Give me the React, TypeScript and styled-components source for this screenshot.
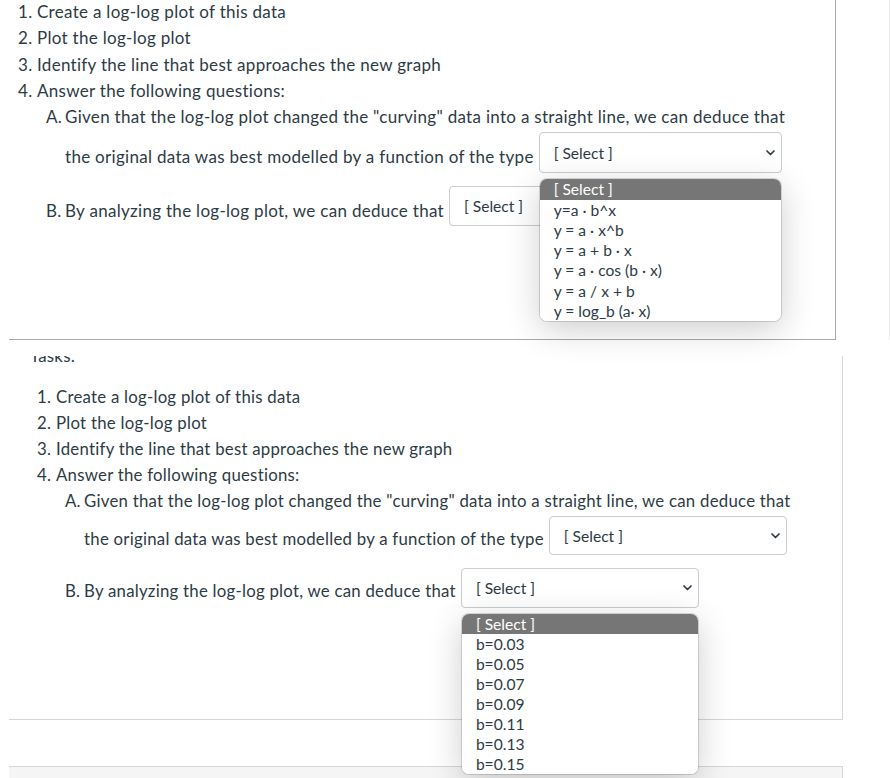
import React from "react";
import styled, { createGlobalStyle } from "styled-components";

const GlobalStyle = createGlobalStyle`
  html, body { margin: 0; padding: 0; background: #fff; overflow: hidden; }
  body {
    font-family: Lato, "Open Sans", "Liberation Sans", sans-serif;
    color: #2d3b45;
    font-size: 16px;
  }
`;

const Page = styled.div`
  width: 890px;
  height: 778px;
  overflow: hidden;
  position: relative;
`;

const TopShot = styled.div`
  width: 890px;
  box-sizing: border-box;
  border-right: 1px solid #ececec;
`;

const TopPanel = styled.section`
  margin-left: 9px;
  width: 827px;
  height: 341px;
  box-sizing: border-box;
  border-right: 1px solid #a9a9a9;
  border-bottom: 1px solid #a9a9a9;
  padding-left: 9px;
  font-size: 17px;
  letter-spacing: 0.3px;
`;

const BottomPanel = styled.section`
  margin-left: 9px;
  margin-top: 16px;
  width: 834px;
  box-sizing: border-box;
  border-right: 1px solid #d6d6d6;
  border-bottom: 1px solid #d6d6d6;
  padding-left: 21px;
  padding-bottom: 111px;
  font-size: 16.8px;
  letter-spacing: 0.25px;
`;

const GrayBar = styled.div`
  margin-left: 9px;
  margin-top: 46px;
  width: 834px;
  height: 40px;
  box-sizing: border-box;
  border-top: 1px solid #d6d6d6;
  border-right: 1px solid #d6d6d6;
  background: #f5f5f5;
`;

const TasksClip = styled.div`
  height: 9px;
  overflow: hidden;
`;

const TasksText = styled.p`
  margin: -13px 0 0;
  line-height: 26px;
`;

const List = styled.div<{ $mt: number; $ml: number }>`
  margin-top: ${(p) => p.$mt}px;
  margin-left: ${(p) => p.$ml}px;
`;

const Item = styled.div<{ $lh: number }>`
  display: flex;
  align-items: flex-start;
  line-height: ${(p) => p.$lh}px;
`;

const Marker = styled.span<{ $dy?: number }>`
  flex: none;
  width: 19px;
  white-space: nowrap;
  padding-top: ${(p) => p.$dy ?? 0}px;
`;

const Body = styled.div`
  flex: 1;
  min-width: 0;
  white-space: nowrap;
`;

const SubList = styled.div`
  margin-left: 9px;
`;

const SelectRow = styled.div<{ $mt: number }>`
  display: flex;
  align-items: flex-start;
  margin-top: ${(p) => p.$mt}px;
`;

const RowText = styled.span<{ $dy: number }>`
  padding-top: ${(p) => p.$dy}px;
  margin-right: 5px;
  white-space: nowrap;
`;

const SelectBox = styled.div<{ $w: number; $h: number }>`
  position: relative;
  flex: none;
  width: ${(p) => p.$w}px;
  height: ${(p) => p.$h}px;
  box-sizing: border-box;
  border: 1px solid #c7cdd1;
  border-radius: 4px;
  background: #fff;
  display: flex;
  align-items: center;
  justify-content: space-between;
  padding: 0 6px 0 14px;
  line-height: 20px;
  font-size: 15.6px;
  letter-spacing: 0;
  color: #2d3b45;
`;

const Chevron = styled.svg`
  flex: none;
  display: block;
`;

const Listbox = styled.div<{ $w: number }>`
  position: absolute;
  left: 0;
  top: calc(100% + 7px);
  width: ${(p) => p.$w}px;
  z-index: 10;
  background: #fff;
  border-radius: 7px;
  overflow: hidden;
  box-shadow: 0 0 0 1px rgba(0, 0, 0, 0.14), 0 8px 34px rgba(0, 0, 0, 0.2);
`;

const OptionRow = styled.div<{ $active?: boolean; $h: number }>`
  height: ${(p) => p.$h}px;
  line-height: ${(p) => p.$h}px;
  padding-left: 14px;
  font-size: 15.6px;
  white-space: nowrap;
  background: ${(p) => (p.$active ? "#767676" : "#fff")};
  color: ${(p) => (p.$active ? "#fff" : "#2d3b45")};
`;

const ChevronIcon = () => (
  <Chevron width="9" height="6" viewBox="0 0 9 6">
    <path d="M1 1l3.5 3.5L8 1" fill="none" stroke="#2d3b45" strokeWidth="1.7" strokeLinecap="round" strokeLinejoin="round" />
  </Chevron>
);

type SelectProps = {
  w: number;
  h: number;
  open?: string[];
  listW?: number;
  rowH?: number;
};

const Select = ({ w, h, open, listW, rowH = 20 }: SelectProps) => (
  <SelectBox $w={w} $h={h}>
    <span>[ Select ]</span>
    <ChevronIcon />
    {open && (
      <Listbox $w={listW ?? w - 2}>
        <OptionRow $active $h={rowH}>[ Select ]</OptionRow>
        {open.map((o) => (
          <OptionRow key={o} $h={rowH}>
            {o}
          </OptionRow>
        ))}
      </Listbox>
    )}
  </SelectBox>
);

const TYPE_OPTIONS = [
  "y=a · b^x",
  "y = a · x^b",
  "y = a + b · x",
  "y = a · cos (b · x)",
  "y = a / x + b",
  "y = log_b (a· x)",
];

const B_OPTIONS = ["b=0.03", "b=0.05", "b=0.07", "b=0.09", "b=0.11", "b=0.13", "b=0.15"];

const STEPS = [
  "Create a log-log plot of this data",
  "Plot the log-log plot",
  "Identify the line that best approaches the new graph",
];

type TaskListProps = {
  lh: number;
  mt: number;
  ml: number;
  dy: number;
  aH: number;
  bH: number;
  aW: number;
  bW: number;
  openA?: boolean;
  openB?: boolean;
  rowH?: number;
};

const TaskList = ({ lh, mt, ml, dy, aH, bH, aW, bW, openA, openB, rowH }: TaskListProps) => (
  <List $mt={mt} $ml={ml}>
    {STEPS.map((s, i) => (
      <Item key={s} $lh={lh}>
        <Marker>{i + 1}.</Marker>
        <Body>{s}</Body>
      </Item>
    ))}
    <Item $lh={lh}>
      <Marker>4.</Marker>
      <Body>
        Answer the following questions:
        <SubList>
          <Item $lh={lh}>
            <Marker>A.</Marker>
            <Body>
              Given that the log-log plot changed the "curving" data into a straight line, we can deduce that
              <SelectRow $mt={2}>
                <RowText $dy={dy}>the original data was best modelled by a function of the type</RowText>
                <Select w={aW} h={aH} open={openA ? TYPE_OPTIONS : undefined} rowH={rowH} />
              </SelectRow>
            </Body>
          </Item>
          <SelectRow $mt={13}>
            <Marker $dy={dy}>B.</Marker>
            <RowText $dy={dy}>By analyzing the log-log plot, we can deduce that</RowText>
            <Select w={bW} h={bH} open={openB ? B_OPTIONS : undefined} rowH={rowH} />
          </SelectRow>
        </SubList>
      </Body>
    </Item>
  </List>
);

export default function App() {
  return (
    <Page>
      <GlobalStyle />
      <TopShot>
        <TopPanel>
          <TaskList lh={26.25} mt={-1} ml={0} dy={12} aH={41} bH={40} aW={243} bW={238} openA rowH={20.3} />
        </TopPanel>
      </TopShot>
      <BottomPanel>
        <TasksClip>
          <TasksText>Tasks:</TasksText>
        </TasksClip>
        <TaskList lh={26} mt={19} ml={7} dy={10} aH={39} bH={40} aW={238} bW={238} openB rowH={20} />
      </BottomPanel>
      <GrayBar />
    </Page>
  );
}
